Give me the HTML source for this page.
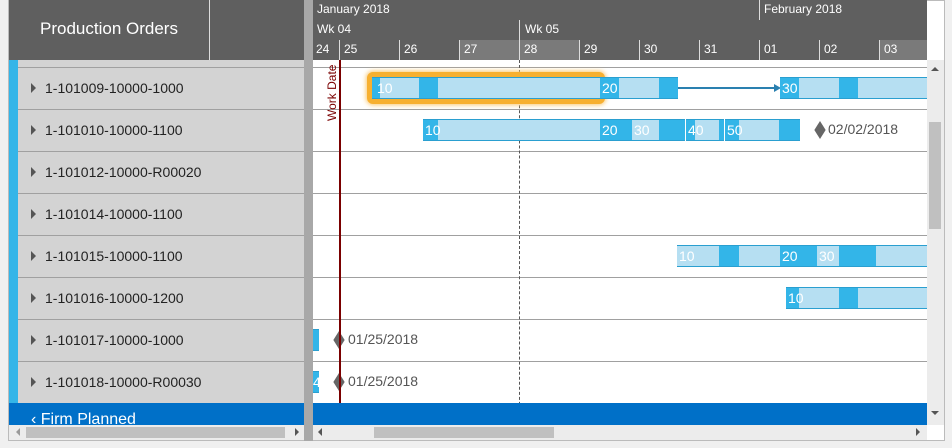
<!DOCTYPE html><html><head><style>
body{margin:0;width:952px;height:448px;overflow:hidden;background:#f0f0f0;font-family:"Segoe UI","Liberation Sans",sans-serif;position:relative}
div{position:absolute;box-sizing:border-box}
.t{color:#fff;font-size:12px}
.row{left:18px;width:286px;height:42px;border-top:1px solid #a0a0a0;background:#d3d3d3;font-size:14px;color:#222;line-height:40px;padding-left:27px}
.row:before{content:"";position:absolute;left:13px;top:15px;border-left:5px solid #555;border-top:5px solid transparent;border-bottom:5px solid transparent}
.hl{left:313px;width:614px;height:1px;background:#a0a0a0}
.d{background:#33b5e8;border-top:1px solid #2a9fd0;border-bottom:1px solid #2a9fd0}
.l{background:#b6dff2;border-top:1px solid #2a9fd0;border-bottom:1px solid #2a9fd0}
.n{color:#fff;font-size:14px;line-height:20px;padding-left:2px}
.dia{width:8px;height:8px;background:#666;transform:scaleY(1.6) rotate(45deg)}
.dt{font-size:14px;color:#555}
</style></head><body>
<div style="left:8px;top:0;width:937px;height:441px;background:#fff;border:1px solid #bbb"></div>
<div style="left:9px;top:0;width:295px;height:60px;background:#5f5f5f"></div>
<div class="t" style="left:40px;top:19px;font-size:17px">Production Orders</div>
<div style="left:209px;top:0;width:1px;height:60px;background:#ddd"></div>
<div style="left:9px;top:60px;width:295px;height:343px;background:#d3d3d3"></div>
<div style="left:9px;top:60px;width:9px;height:343px;background:#33b5e8"></div>
<div class="row" style="top:67px">1-101009-10000-1000</div>
<div class="row" style="top:109px">1-101010-10000-1100</div>
<div class="row" style="top:151px">1-101012-10000-R00020</div>
<div class="row" style="top:193px">1-101014-10000-1100</div>
<div class="row" style="top:235px">1-101015-10000-1100</div>
<div class="row" style="top:277px">1-101016-10000-1200</div>
<div class="row" style="top:319px">1-101017-10000-1000</div>
<div class="row" style="top:361px">1-101018-10000-R00030</div>
<div style="left:304px;top:0;width:9px;height:441px;background:#a8a8a8"></div>
<div style="left:313px;top:0;width:614px;height:60px;background:#5f5f5f"></div>
<div style="left:459px;top:40px;width:120px;height:20px;background:#7a7a7a"></div>
<div style="left:879px;top:40px;width:48px;height:20px;background:#7a7a7a"></div>
<div class="t" style="left:317px;top:2px">January 2018</div>
<div class="t" style="left:764px;top:2px">February 2018</div>
<div style="left:759px;top:0;width:1px;height:20px;background:#ddd"></div>
<div class="t" style="left:317px;top:22px">Wk 04</div>
<div class="t" style="left:525px;top:22px">Wk 05</div>
<div style="left:519px;top:20px;width:1px;height:40px;background:#ddd"></div>
<div class="t" style="left:316px;top:42px">24</div>
<div style="left:339px;top:40px;width:1px;height:20px;background:#ddd"></div><div class="t" style="left:344px;top:42px">25</div>
<div style="left:399px;top:40px;width:1px;height:20px;background:#ddd"></div><div class="t" style="left:404px;top:42px">26</div>
<div style="left:459px;top:40px;width:1px;height:20px;background:#ddd"></div><div class="t" style="left:464px;top:42px">27</div>
<div class="t" style="left:524px;top:42px">28</div>
<div style="left:579px;top:40px;width:1px;height:20px;background:#ddd"></div><div class="t" style="left:584px;top:42px">29</div>
<div style="left:639px;top:40px;width:1px;height:20px;background:#ddd"></div><div class="t" style="left:644px;top:42px">30</div>
<div style="left:699px;top:40px;width:1px;height:20px;background:#ddd"></div><div class="t" style="left:704px;top:42px">31</div>
<div style="left:759px;top:40px;width:1px;height:20px;background:#ddd"></div><div class="t" style="left:764px;top:42px">01</div>
<div style="left:819px;top:40px;width:1px;height:20px;background:#ddd"></div><div class="t" style="left:824px;top:42px">02</div>
<div style="left:879px;top:40px;width:1px;height:20px;background:#ddd"></div><div class="t" style="left:884px;top:42px">03</div>
<div class="hl" style="top:67px"></div><div class="hl" style="top:109px"></div><div class="hl" style="top:151px"></div><div class="hl" style="top:193px"></div><div class="hl" style="top:235px"></div><div class="hl" style="top:277px"></div><div class="hl" style="top:319px"></div><div class="hl" style="top:361px"></div>
<div style="left:519px;top:60px;height:365px;border-left:1px dashed #555"></div>
<div style="left:367px;top:72px;width:238px;height:32px;background:#f7b030;border-radius:6px;box-shadow:0 0 5px 1px #f9c870"></div>
<div class="l" style="left:372px;top:77px;width:228px;height:22px"></div>
<div class="d n" style="left:372px;top:77px;width:8px;height:22px"></div><div class="n" style="left:375px;top:78px">10</div>
<div class="d" style="left:419px;top:77px;width:19px;height:22px"></div>
<div class="l" style="left:600px;top:77px;width:78px;height:22px"></div>
<div class="d n" style="left:600px;top:77px;width:19px;height:22px">20</div>
<div class="d" style="left:659px;top:77px;width:19px;height:22px"></div>
<div style="left:678px;top:87px;width:100px;height:2px;background:#2a80b0"></div>
<div style="left:774px;top:84px;border-left:7px solid #2a80b0;border-top:4px solid transparent;border-bottom:4px solid transparent"></div>
<div class="l" style="left:780px;top:77px;width:147px;height:22px"></div>
<div class="d n" style="left:780px;top:77px;width:19px;height:22px">30</div>
<div class="d" style="left:839px;top:77px;width:19px;height:22px"></div>
<div class="l" style="left:423px;top:119px;width:177px;height:22px"></div>
<div class="d n" style="left:423px;top:119px;width:15px;height:22px">10</div>
<div class="d n" style="left:600px;top:119px;width:32px;height:22px">20</div>
<div class="l n" style="left:632px;top:119px;width:27px;height:22px">30</div>
<div class="d" style="left:659px;top:119px;width:26px;height:22px"></div>
<div class="l" style="left:686px;top:119px;width:38px;height:22px"></div>
<div class="d n" style="left:686px;top:119px;width:9px;height:22px">40</div>
<div class="d" style="left:719px;top:119px;width:5px;height:22px"></div>
<div class="l" style="left:725px;top:119px;width:75px;height:22px"></div>
<div class="d n" style="left:725px;top:119px;width:14px;height:22px">50</div>
<div class="d" style="left:779px;top:119px;width:21px;height:22px"></div>
<div class="dia" style="left:816px;top:126px"></div><div class="dt" style="left:828px;top:121px">02/02/2018</div>
<div class="l n" style="left:677px;top:245px;width:103px;height:22px">10</div>
<div class="d" style="left:719px;top:245px;width:20px;height:22px"></div>
<div class="d n" style="left:780px;top:245px;width:37px;height:22px">20</div>
<div class="l n" style="left:817px;top:245px;width:110px;height:22px">30</div>
<div class="d" style="left:839px;top:245px;width:37px;height:22px"></div>
<div class="l" style="left:786px;top:287px;width:141px;height:22px"></div>
<div class="d n" style="left:786px;top:287px;width:13px;height:22px">10</div>
<div class="d" style="left:839px;top:287px;width:19px;height:22px"></div>
<div class="d" style="left:313px;top:329px;width:6px;height:22px"></div>
<div class="dia" style="left:335px;top:336px"></div><div class="dt" style="left:348px;top:331px">01/25/2018</div>
<div class="d n" style="left:313px;top:371px;width:6px;height:22px;padding:0;overflow:hidden">4</div>
<div class="dia" style="left:335px;top:378px"></div><div class="dt" style="left:348px;top:373px">01/25/2018</div>
<div style="left:339px;top:60px;width:2px;height:365px;background:#7a0000"></div>
<div style="left:325px;top:121px;color:#7a0000;font-size:12px;transform:rotate(-90deg);transform-origin:0 0;white-space:nowrap">Work Date</div>
<div style="left:9px;top:403px;width:295px;height:22px;background:#0070c8;overflow:hidden"><div class="t" style="left:22px;top:8px;font-size:16px">‹ Firm Planned</div></div>
<div style="left:313px;top:403px;width:614px;height:22px;background:#0070c8"></div>
<div style="left:9px;top:425px;width:295px;height:15px;background:#ececec"></div>
<div style="left:26px;top:427px;width:259px;height:11px;background:#c0c0c0"></div>
<div style="left:313px;top:425px;width:614px;height:15px;background:#ececec"></div>
<div style="left:374px;top:427px;width:180px;height:11px;background:#c0c0c0"></div>
<div style="left:927px;top:60px;width:17px;height:365px;background:#ececec"></div>
<div style="left:929px;top:122px;width:12px;height:107px;background:#c0c0c0"></div>
<div style="left:931px;top:67px;border-bottom:4px solid #555;border-left:4px solid transparent;border-right:4px solid transparent"></div>
<div style="left:931px;top:411px;border-top:4px solid #555;border-left:4px solid transparent;border-right:4px solid transparent"></div>
<div style="left:16px;top:428px;border-right:4px solid #999;border-top:4px solid transparent;border-bottom:4px solid transparent"></div>
<div style="left:295px;top:428px;border-left:4px solid #555;border-top:4px solid transparent;border-bottom:4px solid transparent"></div>
<div style="left:318px;top:428px;border-right:4px solid #555;border-top:4px solid transparent;border-bottom:4px solid transparent"></div>
<div style="left:916px;top:428px;border-left:4px solid #555;border-top:4px solid transparent;border-bottom:4px solid transparent"></div>
</body></html>
